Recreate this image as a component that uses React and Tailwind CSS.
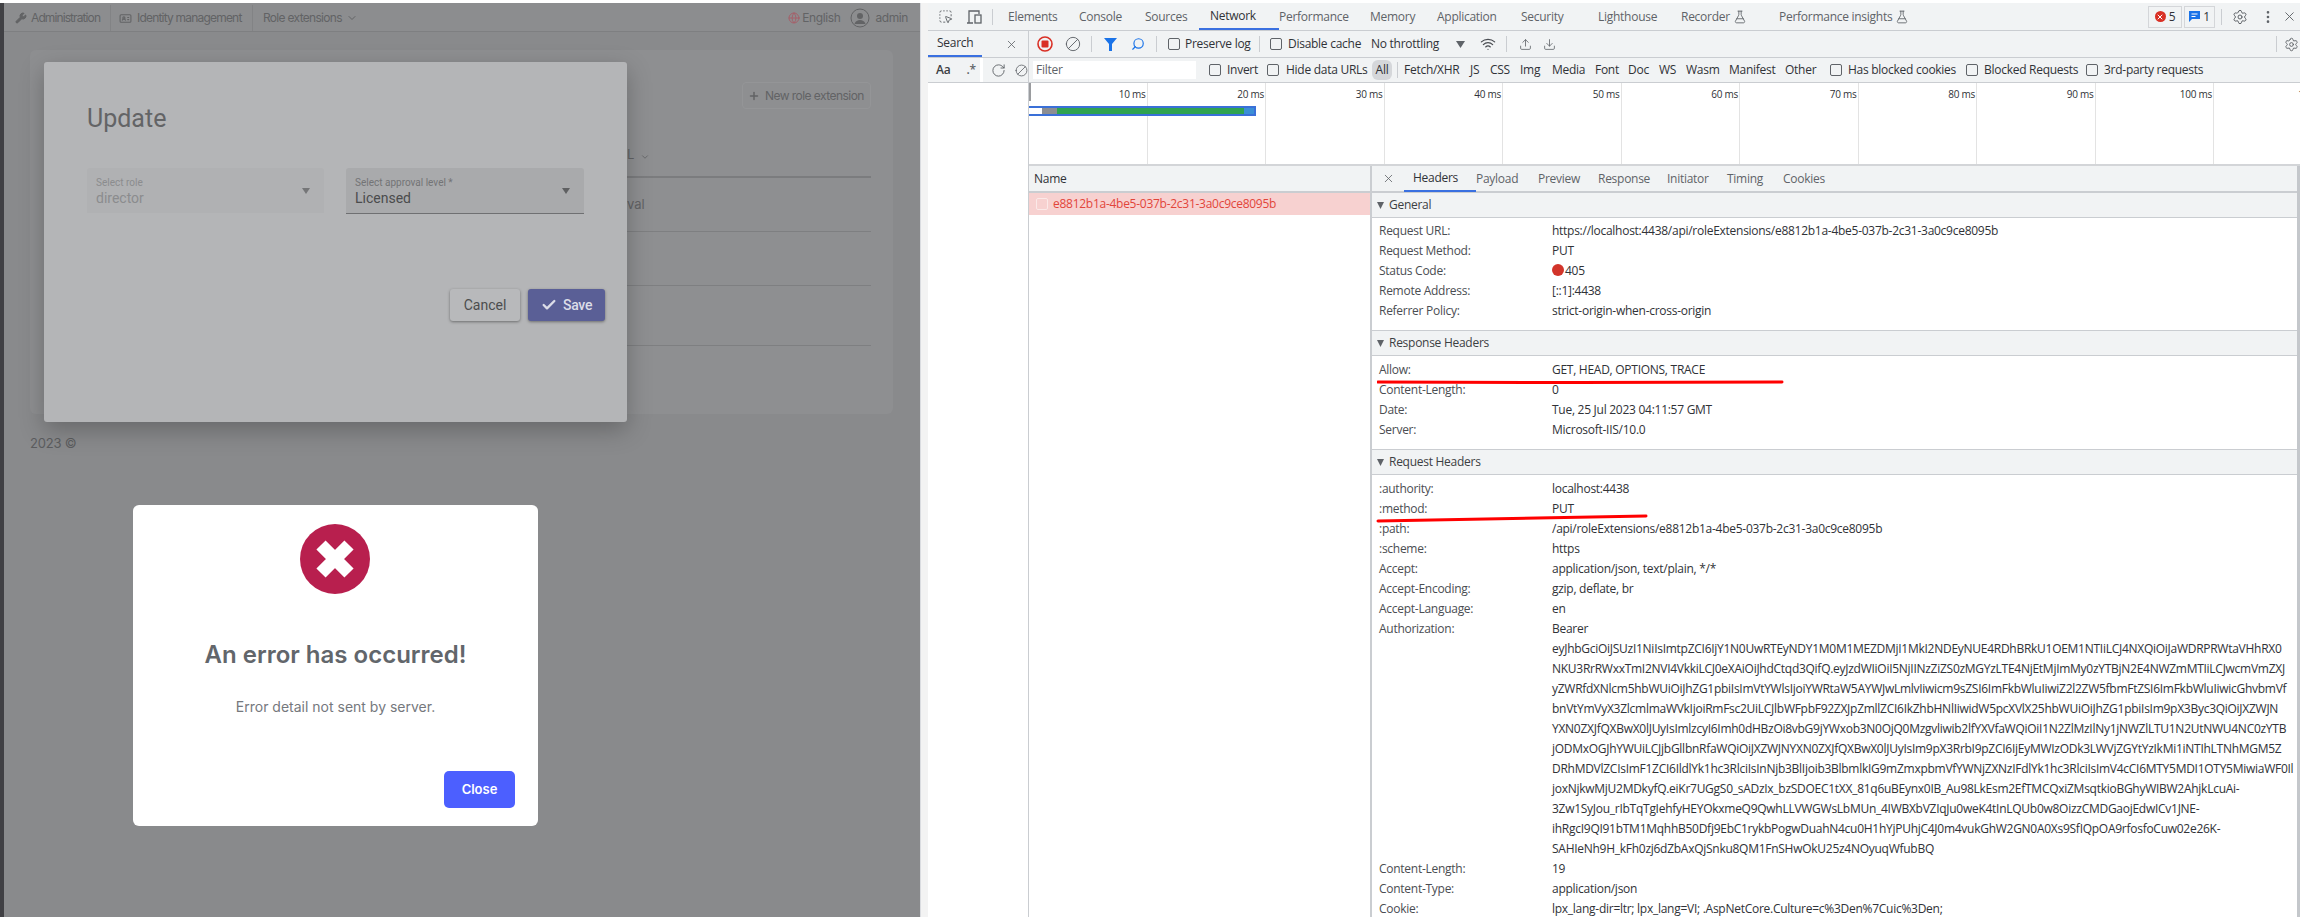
import React from "react";
import {
  Ban,
  Check,
  ChevronDown,
  Download,
  EllipsisVertical,
  FlaskConical,
  Globe,
  IdCard,
  Plus,
  RotateCw,
  Search,
  Settings,
  SquareDashedMousePointer,
  Upload,
  Wifi,
  Wrench,
  X,
} from "lucide-react";

const mainTabs = [
  { label: "Elements", w: "w-[71px]" },
  { label: "Console", w: "w-[66px]" },
  { label: "Sources", w: "w-[65px]" },
  { label: "Network", w: "w-[80px]", active: true },
  { label: "Performance", w: "w-[91px]" },
  { label: "Memory", w: "w-[67px]" },
  { label: "Application", w: "w-[84px]" },
  { label: "Security", w: "w-[77px]" },
  { label: "Lighthouse", w: "w-[83px]" },
];

const typeFilters = [
  { label: "Fetch/XHR", w: "w-[66px]" },
  { label: "JS", w: "w-[20px]" },
  { label: "CSS", w: "w-[30px]" },
  { label: "Img", w: "w-[32px]" },
  { label: "Media", w: "w-[43px]" },
  { label: "Font", w: "w-[33px]" },
  { label: "Doc", w: "w-[31px]" },
  { label: "WS", w: "w-[27px]" },
  { label: "Wasm", w: "w-[43px]" },
  { label: "Manifest", w: "w-[56px]" },
  { label: "Other", w: "w-[45px]" },
];

const detailTabs = [
  { label: "Headers", w: "w-[72px]", active: true },
  { label: "Payload", w: "w-[62px]" },
  { label: "Preview", w: "w-[60px]" },
  { label: "Response", w: "w-[69px]" },
  { label: "Initiator", w: "w-[60px]" },
  { label: "Timing", w: "w-[56px]" },
  { label: "Cookies", w: "w-[56px]" },
];

const ticks = ["10 ms", "20 ms", "30 ms", "40 ms", "50 ms", "60 ms", "70 ms", "80 ms", "90 ms", "100 ms", "110 ms"];

const general = [
  ["Request URL:", "https://localhost:4438/api/roleExtensions/e8812b1a-4be5-037b-2c31-3a0c9ce8095b"],
  ["Request Method:", "PUT"],
  ["Status Code:", "405"],
  ["Remote Address:", "[::1]:4438"],
  ["Referrer Policy:", "strict-origin-when-cross-origin"],
];

const responseHeaders = [
  ["Allow:", "GET, HEAD, OPTIONS, TRACE"],
  ["Content-Length:", "0"],
  ["Date:", "Tue, 25 Jul 2023 04:11:57 GMT"],
  ["Server:", "Microsoft-IIS/10.0"],
];

const requestHeaders = [
  [":authority:", "localhost:4438"],
  [":method:", "PUT"],
  [":path:", "/api/roleExtensions/e8812b1a-4be5-037b-2c31-3a0c9ce8095b"],
  [":scheme:", "https"],
  ["Accept:", "application/json, text/plain, */*"],
  ["Accept-Encoding:", "gzip, deflate, br"],
  ["Accept-Language:", "en"],
];

const token = [
  "Bearer",
  "eyJhbGciOiJSUzI1NiIsImtpZCI6IjY1N0UwRTEyNDY1M0M1MEZDMjI1MkI2NDEyNUE4RDhBRkU1OEM1NTIiLCJ4NXQiOiJaWDRPRWtaVHhRX0",
  "NKU3RrRWxxTmI2NVI4VkkiLCJ0eXAiOiJhdCtqd3QifQ.eyJzdWIiOiI5NjIINzZiZS0zMGYzLTE4NjEtMjImMy0zYTBjN2E4NWZmMTIiLCJwcmVmZXJ",
  "yZWRfdXNlcm5hbWUiOiJhZG1pbiIsImVtYWlsIjoiYWRtaW5AYWJwLmlvIiwicm9sZSI6ImFkbWluIiwiZ2l2ZW5fbmFtZSI6ImFkbWluIiwicGhvbmVf",
  "bnVtYmVyX3ZlcmlmaWVkIjoiRmFsc2UiLCJlbWFpbF92ZXJpZmllZCI6IkZhbHNlIiwidW5pcXVlX25hbWUiOiJhZG1pbiIsIm9pX3Byc3QiOiJXZWJN",
  "YXN0ZXJfQXBwX0lJUyIsImlzcyI6Imh0dHBzOi8vbG9jYWxob3N0OjQ0Mzgvliwib2lfYXVfaWQiOiI1N2ZlMzIlNy1jNWZlLTU1N2UtNWU4NC0zYTB",
  "jODMxOGJhYWUiLCJjbGllbnRfaWQiOiJXZWJNYXN0ZXJfQXBwX0lJUyIsIm9pX3RrbI9pZCI6IjEyMWIzODk3LWVjZGYtYzIkMi1iNTIhLTNhMGM5Z",
  "DRhMDVlZCIsImF1ZCI6IldlYk1hc3RlciIsInNjb3BlIjoib3BlbmlkIG9mZmxpbmVfYWNjZXNzIFdlYk1hc3RlciIsImV4cCI6MTY5MDI1OTY5MiwiaWF0Il",
  "joxNjkwMjU2MDkyfQ.eiKr7UGgS0_sADzIx_bzSDOEC1tXX_81q6uBEynx0IB_Au98LkEsm2EfTMCQxiZMsqtkioBGhyWIBW2AhjkLcuAi-",
  "3Zw1SyJou_rIbTqTgIehfyHEYOkxmeQ9QwhLLVWGWsLbMUn_4IWBXbVZIqJu0weK4tInLQUb0w8OizzCMDGaojEdwICv1JNE-",
  "ihRgcI9QI91bTM1MqhhB50Dfj9EbC1rykbPogwDuahN4cu0H1hYjPUhjC4J0m4vukGhW2GN0A0Xs9SfIQpOA9rfosfoCuw02e26K-",
  "SAHIeNh9H_kFh0zj6dZbAxQjSnku8QM1FnSHwOkU25z4NOyuqWfubBQ",
];

const afterAuth = [
  ["Content-Length:", "19"],
  ["Content-Type:", "application/json"],
  ["Cookie:", "lpx_lang-dir=ltr; lpx_lang=VI; .AspNetCore.Culture=c%3Den%7Cuic%3Den;"],
];

const Box = ({ className = "" }) => (
  <div className={`h-[12px] w-[12px] shrink-0 rounded-[2px] border border-[#5f6368] ${className}`} />
);

const Sep = ({ className = "" }) => <div className={`h-[16px] w-px shrink-0 bg-[#cacdd1] ${className}`} />;

const Label = ({ className = "", children }) => (
  <div className={`shrink-0 whitespace-nowrap ${className}`}>{children}</div>
);

const HeaderRow = ({ name, children }) => (
  <div className="flex h-[20px] items-center whitespace-nowrap pl-[7px]">
    <div className="w-[173px] shrink-0 text-[#4a4d52]">{name}</div>
    <div className="flex items-center text-[#303237]">{children}</div>
  </div>
);

const SectionTitle = ({ children }) => (
  <div className="flex h-[25px] shrink-0 items-center border-b border-[#cacdd1] bg-[#f1f3f4] pl-[5px] text-[#3c4043]">
    <svg width="7" height="7" viewBox="0 0 7 7" className="mr-[5px]">
      <polygon points="0,0 7,0 3.5,7" fill="#5f6368" />
    </svg>
    {children}
  </div>
);

const AdminBehind = () => (
  <div className="flex h-full flex-col rounded-t-[8px] bg-[#898a8c] font-['Inter',sans-serif] text-[#626365]">
    <div className="flex h-[29px] shrink-0 items-center border-b border-[#7e7f81] bg-[#8c8d8f] pt-[2px] text-[12px]">
      <div className="flex h-full w-[107px] items-center border-r border-[#828385] pl-[11px]">
        <Wrench size={12} className="mr-[4px] fill-[#626365]" />
        <span className="whitespace-nowrap tracking-[-0.9px]">Administration</span>
      </div>
      <div className="flex h-full w-[142px] items-center border-r border-[#828385] pl-[8px]">
        <IdCard size={13} className="mr-[5px]" />
        <span className="whitespace-nowrap tracking-[-0.8px]">Identity management</span>
      </div>
      <div className="flex items-center pl-[10px]">
        <span className="whitespace-nowrap tracking-[-0.7px]">Role extensions</span>
        <ChevronDown size={12} className="ml-[4px]" />
      </div>
      <div className="ml-auto flex items-center pr-[12px]">
        <Globe size={12} className="mr-[2px] text-[#a5606a]" />
        <span className="tracking-[-0.4px]">English</span>
        <svg width="20" height="20" viewBox="0 0 20 20" className="ml-[10px]">
          <circle cx="10" cy="10" r="9" fill="none" stroke="#626365" strokeWidth="1" />
          <circle cx="10" cy="8" r="3" fill="#626365" />
          <path d="M4.5 16c1-3 3-4 5.5-4s4.500 1 5.500 4" fill="#626365" />
        </svg>
        <span className="ml-[5px] tracking-[-0.4px]">admin</span>
      </div>
    </div>
    <div className="ml-[26px] mt-[18px] flex h-[364px] w-[863px] flex-col items-end rounded-[6px] bg-[#8e8f91] pr-[22px] pt-[32px]">
      <div className="flex h-[27px] w-[129px] items-center rounded-[4px] border border-[#949597] pl-[5px] text-[12px]">
        <Plus size={12} strokeWidth={3} className="mr-[5px]" />
        <span className="whitespace-nowrap tracking-[-0.55px]">New role extension</span>
      </div>
      <div className="flex h-[69px] w-[244px] items-end border-b-2 border-[#7b7c7e] pb-[12px] pl-[0px] text-[13px]">
        <span>L</span>
        <ChevronDown size={10} className="mb-[2px] ml-[6px]" />
      </div>
      <div className="flex h-[54px] w-[244px] items-center border-b border-[#7e7f81] text-[13px]">val</div>
      <div className="h-[54px] w-[244px] border-b border-[#7e7f81]" />
      <div className="h-[60px] w-[244px] border-b border-[#7e7f81]" />
    </div>
    <div className="ml-[26px] mt-[20px] text-[13px] leading-[18px] tracking-[-0.2px] text-[#5c5d5f]">2023 ©</div>
  </div>
);

const UpdateModal = () => (
  <div className="absolute left-[40px] top-[59px] flex h-[360px] w-[583px] flex-col rounded-[3px] bg-[#b4b5b7] pl-[43px] pr-[22px] pt-[39px] font-['Roboto',sans-serif] shadow-[0_8px_24px_rgba(0,0,0,0.25)]">
    <div className="text-[25px] leading-[36px] text-[#636466]">Update</div>
    <div className="mt-[31px] flex gap-[22px]">
      <div className="relative h-[45px] w-[237px] rounded-t-[3px] bg-[#b0b1b3] px-[9px] pt-[9px] text-[#8b8c8e]">
        <div className="text-[10px] leading-[12px]">Select role</div>
        <div className="text-[14px] leading-[18px]">director</div>
        <svg width="8" height="6" viewBox="0 0 8 6" className="absolute right-[14px] top-[20px]">
          <polygon points="0,0 8,0 4,6" fill="#757678" />
        </svg>
      </div>
      <div className="relative h-[46px] w-[238px] rounded-t-[3px] border-b border-[#6f7072] bg-[#a9aaac] px-[9px] pt-[9px]">
        <div className="text-[10px] leading-[12px] text-[#737476]">Select approval level *</div>
        <div className="text-[14px] leading-[18px] text-[#4b4c4d]">Licensed</div>
        <svg width="8" height="6" viewBox="0 0 8 6" className="absolute right-[14px] top-[20px]">
          <polygon points="0,0 8,0 4,6" fill="#5f6062" />
        </svg>
      </div>
    </div>
    <div className="mt-[75px] flex justify-end gap-[8px]">
      <div className="flex h-[32px] w-[70px] items-center justify-center rounded-[3px] bg-[#b8b9bb] text-[14px] text-[#4c4d4e] shadow-[0_1px_3px_rgba(0,0,0,0.4)]">
        Cancel
      </div>
      <div className="flex h-[32px] w-[77px] items-center rounded-[3px] bg-[#5a5f96] pl-[13px] text-[14px] font-medium tracking-[-0.3px] text-[#dcdde8] shadow-[0_1px_3px_rgba(0,0,0,0.4)]">
        <Check size={16} strokeWidth={3.500} className="mr-[6px]" />
        Save
      </div>
    </div>
  </div>
);

const ErrorModal = () => (
  <div className="absolute left-[129px] top-[502px] flex h-[321px] w-[405px] flex-col items-center rounded-[6px] bg-white pt-[19px] font-['Inter',sans-serif]">
    <svg width="70" height="70" viewBox="0 0 70 70" className="-ml-[2px] shrink-0">
      <circle cx="35" cy="35" r="35" fill="#b81f4e" />
      <path d="M21 21 L49 49 M49 21 L21 49" stroke="#ffffff" strokeWidth="13" fill="none" />
    </svg>
    <div className="mt-[43px] text-[24px] font-semibold leading-[36px] text-[#62666b]">An error has occurred!</div>
    <div className="mt-[24px] text-[14px] leading-[20px] text-[#75787d]">Error detail not sent by server.</div>
    <div className="mb-[18px] mr-[23px] mt-auto flex h-[37px] w-[71px] items-center justify-center self-end rounded-[5px] bg-[#4c5fff] text-[13px] font-semibold text-white">
      Close
    </div>
  </div>
);

const DeviceIcon = () => (
  <svg width="16" height="14" viewBox="0 0 16 14" fill="none" stroke="#5f6368" strokeWidth="1.300" className="shrink-0">
    <path d="M1 13h6M3 13V1h10v3" />
    <rect x="9" y="5" width="6" height="8" />
  </svg>
);

const Flask = () => <FlaskConical size={14} strokeWidth={1.500} className="ml-[3px] text-[#5f6368]" />;

const DevToolsTabs = () => (
  <div className="flex h-[28px] shrink-0 items-center border-b border-[#cacdd1] bg-[#f1f3f4] pl-[10px] text-[#5f6368]">
    <SquareDashedMousePointer size={15} strokeWidth={1.500} className="shrink-0" />
    <div className="ml-[13px]">
      <DeviceIcon />
    </div>
    <Sep className="ml-[10px] mr-[15px]" />
    <div className="flex h-full">
      {mainTabs.map((t) => (
        <div
          key={t.label}
          className={`flex h-full shrink-0 items-center whitespace-nowrap ${t.w} ${
            t.active ? "-ml-[11px] border-b-2 border-[#3a70e0] pl-[11px] text-[#303237]" : ""
          }`}
        >
          {t.label}
        </div>
      ))}
    </div>
    <div className="flex w-[98px] shrink-0 items-center whitespace-nowrap">
      Recorder
      <Flask />
    </div>
    <div className="flex shrink-0 items-center whitespace-nowrap">
      Performance insights
      <Flask />
    </div>
    <div className="ml-auto flex items-center pr-[3px]">
      <div className="flex h-[22px] w-[34px] items-center justify-center gap-[3px] border border-[#d4d6d9] text-[#303237]">
        <div className="flex h-[11px] w-[11px] items-center justify-center rounded-full bg-[#d93025]">
          <X size={8} strokeWidth={3} className="text-white" />
        </div>
        5
      </div>
      <div className="ml-[2px] flex h-[22px] w-[31px] items-center justify-center gap-[3px] border border-[#d4d6d9] text-[#303237]">
        <svg width="11" height="11" viewBox="0 0 11 11">
          <path d="M0 0h11v8H3l-3 3z" fill="#1a73e8" />
          <path d="M2.500 3h6M2.500 5.500h4" stroke="#fff" />
        </svg>
        1
      </div>
      <Sep className="ml-[6px]" />
      <Settings size={16} strokeWidth={1.500} className="ml-[10px]" />
      <EllipsisVertical size={16} strokeWidth={2} className="ml-[12px]" />
      <X size={15} strokeWidth={1.500} className="ml-[6px]" />
    </div>
  </div>
);

const LeftColumn = () => (
  <div className="flex w-[101px] shrink-0 flex-col border-r border-[#cacdd1] bg-white text-[#303237]">
    <div className="flex h-[27px] shrink-0 items-center border-b border-[#cacdd1] bg-[#f1f3f4]">
      <div className="flex h-full w-[54px] items-center border-b-2 border-[#3a70e0] pl-[9px]">Search</div>
      <X size={13} strokeWidth={1.500} className="ml-[23px] text-[#5f6368]" />
    </div>
    <div className="flex h-[25px] shrink-0 items-center overflow-hidden border-b border-[#cacdd1] bg-[#f1f3f4] text-[#5f6368]">
      <span className="ml-[8px] w-[15px] font-semibold text-[#3c4043]">Aa</span>
      <span className="ml-[16px] w-[10px] font-semibold">.*</span>
      <div className="ml-[4px] h-full w-[3px] bg-white" />
      <RotateCw size={15} strokeWidth={1.500} className="ml-[8px] shrink-0" />
      <Ban size={13} strokeWidth={1.500} className="ml-[9px] shrink-0 -scale-x-100" />
    </div>
  </div>
);

const NetworkToolbar = () => (
  <div className="flex h-[27px] shrink-0 items-center border-b border-[#cacdd1] bg-[#f1f3f4] text-[#303237]">
    <svg width="16" height="16" viewBox="0 0 16 16" className="ml-[8px] shrink-0">
      <circle cx="8" cy="8" r="7" fill="none" stroke="#d93025" strokeWidth="1.600" />
      <rect x="4.500" y="4.500" width="7" height="7" rx="1" fill="#d93025" />
    </svg>
    <Ban size={16} strokeWidth={1.400} className="ml-[12px] shrink-0 -scale-x-100 text-[#5f6368]" />
    <Sep className="ml-[10px]" />
    <svg width="13" height="13" viewBox="0 0 13 13" className="ml-[12px] shrink-0">
      <polygon points="0,0 13,0 8,6 8,13 5,13 5,6" fill="#1a73e8" />
    </svg>
    <Search size={14} strokeWidth={2} className="ml-[14px] shrink-0 -scale-x-100 text-[#1a73e8]" />
    <Sep className="ml-[11px]" />
    <Box className="ml-[11px]" />
    <Label className="ml-[5px] w-[65px]">Preserve log</Label>
    <Sep className="ml-[9px]" />
    <Box className="ml-[10px]" />
    <Label className="ml-[6px] w-[72px]">Disable cache</Label>
    <Label className="ml-[11px] w-[69px]">No throttling</Label>
    <svg width="9" height="7" viewBox="0 0 9 7" className="ml-[16px] shrink-0">
      <polygon points="0,0 9,0 4.500,7" fill="#5f6368" />
    </svg>
    <Wifi size={16} strokeWidth={1.800} className="ml-[15px] shrink-0 text-[#4a4d52]" />
    <Sep className="ml-[10px]" />
    <Upload size={13} strokeWidth={1.500} className="ml-[12px] shrink-0 text-[#5f6368]" />
    <Download size={13} strokeWidth={1.500} className="ml-[11px] shrink-0 text-[#5f6368]" />
    <Sep className="ml-auto" />
    <Settings size={15} strokeWidth={1.500} className="ml-[7px] mr-px shrink-0 text-[#5f6368]" />
  </div>
);

const FilterBar = () => (
  <div className="flex h-[25px] shrink-0 items-center border-b border-[#cacdd1] bg-[#f1f3f4] text-[#303237]">
    <div className="ml-[4px] flex h-[18px] w-[163px] shrink-0 items-center bg-white pl-[3px] text-[#5f6368]">Filter</div>
    <Box className="ml-[13px]" />
    <Label className="ml-[6px] w-[30px]">Invert</Label>
    <Box className="ml-[10px]" />
    <Label className="ml-[7px] w-[80px]">Hide data URLs</Label>
    <div className="ml-[6px] flex h-[20px] w-[20px] shrink-0 items-center justify-center rounded-[6px] bg-[#d5d7da]">All</div>
    <Sep className="ml-[5px] mr-[6px]" />
    {typeFilters.map((f) => (
      <Label key={f.label} className={f.w}>
        {f.label}
      </Label>
    ))}
    <Box />
    <Label className="ml-[6px] w-[108px]">Has blocked cookies</Label>
    <Box className="ml-[10px]" />
    <Label className="ml-[6px] w-[92px]">Blocked Requests</Label>
    <Box className="ml-[10px]" />
    <Label className="ml-[6px]">3rd-party requests</Label>
  </div>
);

const Overview = () => (
  <div className="relative flex h-[83px] shrink-0 overflow-hidden border-b-2 border-[#d3d5d8] bg-white text-[10px] text-[#303237]">
    {ticks.map((t) => (
      <div key={t} className="h-full w-[118.5px] shrink-0 whitespace-nowrap border-r border-[#e3e3e3] pr-[1px] pt-[5px] text-right leading-[12px]">
        {t}
      </div>
    ))}
    <div className="absolute left-0 top-0 h-[18px] w-[2px] bg-[#9a9c9f]" />
    <div className="absolute left-0 top-[23px] flex h-[10px] w-[227px] border-y-2 border-r-2 border-[#3a70d8] bg-white">
      <div className="w-[13px] shrink-0" />
      <div className="w-[15px] shrink-0 bg-[#8c8e92]" />
      <div className="flex-1 bg-[#2fa350]" />
      <div className="w-[10px] shrink-0 bg-[#3b8fd6]" />
    </div>
  </div>
);

const Details = () => (
  <div className="relative flex min-w-0 flex-1 flex-col overflow-hidden border-r-[3px] border-[#c4c7cb] bg-white">
    <div className="flex h-[27px] shrink-0 items-center border-b-2 border-[#cacdd1] bg-[#f1f3f4] text-[#5f6368]">
      <X size={13} strokeWidth={1.500} className="ml-[10px] shrink-0" />
      <div className="ml-[9px] flex h-full pl-[9px]">
        {detailTabs.map((t) => (
          <div
            key={t.label}
            className={`flex h-[26px] shrink-0 items-center whitespace-nowrap ${t.w} ${
              t.active ? "-ml-[9px] border-b-2 border-[#3a70e0] pl-[9px] text-[#303237]" : ""
            }`}
          >
            {t.label}
          </div>
        ))}
      </div>
    </div>
    <SectionTitle>General</SectionTitle>
    <div className="shrink-0 border-b border-[#cacdd1] pb-[9px] pt-[3px]">
      {general.map(([k, v]) => (
        <HeaderRow key={k} name={k}>
          {k === "Status Code:" && <span className="mb-[3px] mr-[1px] h-[12px] w-[12px] rounded-full bg-[#d2342a]" />}
          {v}
        </HeaderRow>
      ))}
    </div>
    <SectionTitle>Response Headers</SectionTitle>
    <div className="shrink-0 border-b border-[#cacdd1] pb-[9px] pt-[4px]">
      {responseHeaders.map(([k, v]) => (
        <HeaderRow key={k} name={k}>
          {v}
        </HeaderRow>
      ))}
    </div>
    <SectionTitle>Request Headers</SectionTitle>
    <div className="shrink-0 pt-[4px]">
      {requestHeaders.map(([k, v]) => (
        <HeaderRow key={k} name={k}>
          {v}
        </HeaderRow>
      ))}
      <div className="flex whitespace-nowrap pl-[7px]">
        <div className="h-[20px] w-[173px] shrink-0 leading-[20px] text-[#4a4d52]">Authorization:</div>
        <div className="leading-[20px] text-[#303237]">
          {token.map((line) => (
            <div key={line} className="h-[20px]">
              {line}
            </div>
          ))}
        </div>
      </div>
      {afterAuth.map(([k, v]) => (
        <HeaderRow key={k} name={k}>
          {v}
        </HeaderRow>
      ))}
    </div>
    <svg width="420" height="12" viewBox="0 0 420 12" className="absolute left-[5px] top-[210px]">
      <path d="M1 6 Q200 7 405 6" stroke="#ff0000" strokeWidth="3" strokeLinecap="round" fill="none" />
    </svg>
    <svg width="290" height="12" viewBox="0 0 290 12" className="absolute left-[4px] top-[346px]">
      <path d="M2 9 L270 4" stroke="#ff0000" strokeWidth="3" strokeLinecap="round" fill="none" />
    </svg>
  </div>
);

const DevTools = () => (
  <div className="flex min-w-0 flex-1 border-l border-[#dadce0] bg-[#f3f3f3] pl-[7px]">
    <div className="flex min-w-0 flex-1 flex-col font-['Open_Sans',sans-serif] text-[12px] tracking-[-0.27px]">
      <DevToolsTabs />
      <div className="flex min-h-0 flex-1">
        <LeftColumn />
        <div className="flex min-w-0 flex-1 flex-col">
          <NetworkToolbar />
          <FilterBar />
          <Overview />
          <div className="flex min-h-0 flex-1 bg-white">
            <div className="w-[343px] shrink-0 border-r-2 border-[#cacdd1]">
              <div className="flex h-[27px] items-center border-b-2 border-[#cacdd1] bg-[#f1f3f4] pl-[5px] text-[#303237]">Name</div>
              <div className="flex h-[22px] items-center bg-[#f7d1d0] pl-[7px] text-[#e2453a]">
                <div className="mr-[5px] h-[12px] w-[12px] rounded-[2px] border border-[#fbe9e8]" />
                e8812b1a-4be5-037b-2c31-3a0c9ce8095b
              </div>
            </div>
            <Details />
          </div>
        </div>
      </div>
    </div>
  </div>
);

export default function App() {
  return (
    <div className="flex h-[917px] w-[2300px] flex-col overflow-hidden bg-white">
      <div className="h-[3px] shrink-0 bg-white" />
      <div className="flex min-h-0 flex-1">
        <div className="w-[920px] shrink-0 bg-[#404044] pl-[4px]">
          <div className="relative h-full">
            <AdminBehind />
            <UpdateModal />
            <ErrorModal />
          </div>
        </div>
        <DevTools />
      </div>
    </div>
  );
}
